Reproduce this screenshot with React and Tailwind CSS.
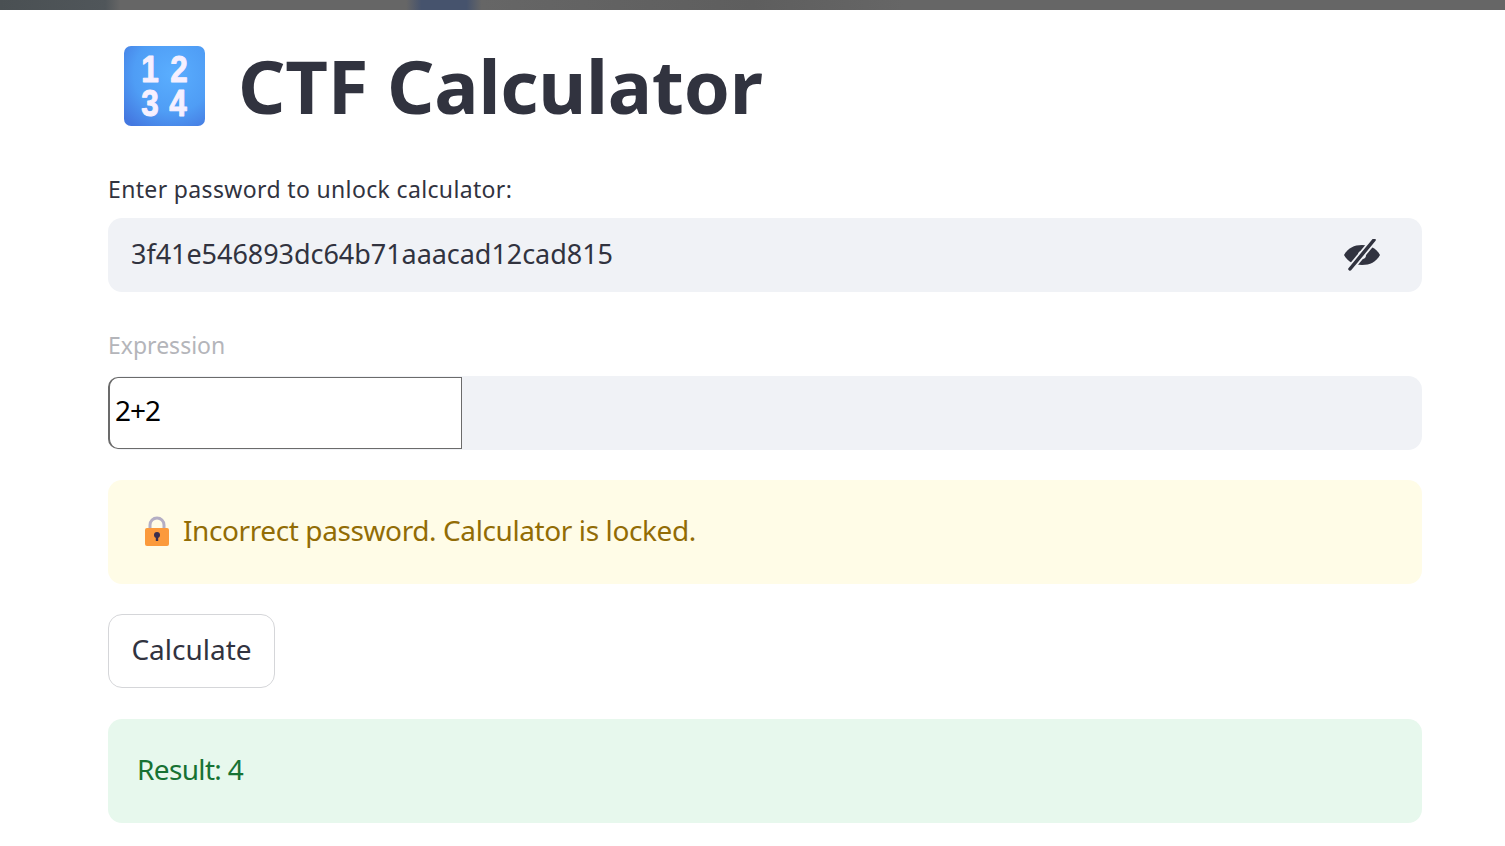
const font = "font-['Noto_Sans',sans-serif]";

const NumbersIcon = () => (
  <svg width="81" height="80" viewBox="0 0 81 80" className="shrink-0">
    <defs>
      <radialGradient id="numbersBg" cx="0.6" cy="0.35" r="0.8">
        <stop offset="0" stopColor="#5aaeff" />
        <stop offset="0.6" stopColor="#4f9df5" />
        <stop offset="1" stopColor="#4478e0" />
      </radialGradient>
    </defs>
    <rect width="81" height="80" rx="7" fill="url(#numbersBg)" />
    <g fill="#f6f0ff" stroke="#f6f0ff" strokeWidth="1" strokeLinejoin="round" fontFamily="Liberation Sans, sans-serif" fontWeight="700" fontSize="37" textAnchor="middle">
      <text transform="translate(26 36) scale(0.85 1)">1</text>
      <text transform="translate(55 36) scale(0.85 1)">2</text>
      <text transform="translate(26 70) scale(0.85 1)">3</text>
      <text transform="translate(54 70) scale(0.85 1)">4</text>
    </g>
  </svg>
);

const EyeOff = () => (
  <svg width="38" height="32" viewBox="0 0 38 32" className="text-[#31333f]">
    <path d="M1 16C5 9 11 6 19 6c8 0 14 3 18 10-4 7-10 10-18 10-8 0-14-3-18-10z" fill="currentColor" />
    <circle cx="19" cy="16" r="4" fill="#f0f2f6" />
    <path d="M31 1 7 30" stroke="#f0f2f6" strokeWidth="7" />
    <path d="M31 1 7 30" stroke="currentColor" strokeWidth="3.5" strokeLinecap="round" />
  </svg>
);

const LockIcon = () => (
  <svg width="28" height="32" viewBox="0 0 28 32" className="shrink-0">
    <path d="M7 14V9a7 7 0 0 1 14 0v5" fill="none" stroke="#b4aec4" strokeWidth="3" />
    <rect x="2" y="12" width="24" height="18" rx="2" fill="#fb9a3c" />
    <circle cx="14" cy="19" r="3" fill="#3a2f4e" />
    <rect x="12.8" y="19" width="2.4" height="6" fill="#3a2f4e" />
  </svg>
);

export default function App() {
  return (
    <div className={`${font} min-h-[846px] bg-white text-[#31333f]`}>
      <div className="h-[10px] bg-[linear-gradient(90deg,#4a5053_0%,#50565a_7%,#666_8%,#666_27%,#46536d_28%,#46536d_31%,#666_32%,#5e5e5e_50%,#666_60%)]" />

      <div className="pl-[108px] pr-[83px]">
        <div className="flex items-center h-[80px] mt-[36px] pl-[16px] gap-[33px]">
          <NumbersIcon />
          <h1 className="font-bold text-[74px] leading-none tracking-[-0.25px] whitespace-nowrap">CTF Calculator</h1>
        </div>

        <label className="block mt-[48px] text-[23px] leading-[30px] tracking-[0.35px]">Enter password to unlock calculator:</label>
        <div className="mt-[14px] h-[74px] rounded-[14px] bg-[#f0f2f6] flex items-center justify-between pl-[23px] pr-[41px]">
          <span className="text-[27px] pb-[2px] tracking-[-0.05px]">3f41e546893dc64b71aaacad12cad815</span>
          <EyeOff />
        </div>

        <label className="block mt-[38px] text-[23px] leading-[30px] text-[#b4b5ba]">Expression</label>
        <div className="mt-[16px] h-[74px] rounded-[14px] bg-[#f0f2f6] flex items-center">
          <input
            readOnly
            value="2+2"
            className="w-[354px] h-[72px] bg-white rounded-l-[10px] border-y border-r border-l-2 border-[#6b6b6b] pl-[5px] pb-[7px] text-[28px] text-black font-['Noto_Sans',sans-serif] tracking-[-1px] outline-none"
          />
        </div>

        <div className="mt-[30px] h-[104px] rounded-[14px] bg-[#fffce7] flex items-center pl-[35px] gap-[12px] text-[#926c05] text-[28px] tracking-[-0.4px]">
          <LockIcon />
          <span className="pb-[5px]">Incorrect password. Calculator is locked.</span>
        </div>

        <button className="block mt-[30px] w-[167px] h-[74px] pb-[4px] rounded-[14px] bg-white border border-[#d5d6d9] text-[28px]">Calculate</button>

        <div className="mt-[31px] h-[104px] pb-[5px] rounded-[14px] bg-[#e7f8ed] flex items-center pl-[29px] text-[#177233] text-[28px] tracking-[-0.65px]">
          Result: 4
        </div>
      </div>
    </div>
  );
}
